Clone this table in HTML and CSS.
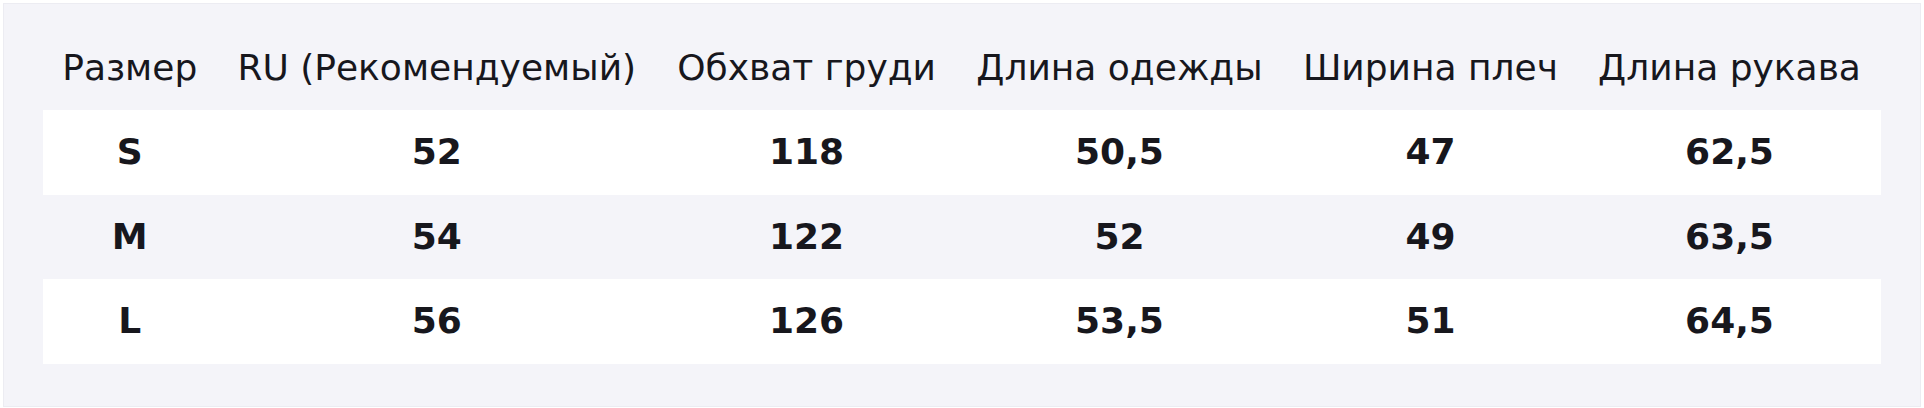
FILE: index.html
```html
<!DOCTYPE html>
<html lang="ru">
<head>
<meta charset="utf-8">
<title>Таблица размеров</title>
<link rel="stylesheet" href="styles.css">
</head>
<body>
<div class="panel">
  <table class="sizes">
    <thead>
      <tr>
        <th>Размер</th>
        <th>RU (Рекомендуемый)</th>
        <th>Обхват груди</th>
        <th>Длина одежды</th>
        <th>Ширина плеч</th>
        <th>Длина рукава</th>
      </tr>
    </thead>
    <tbody>
      <tr class="odd"><td>S</td><td>52</td><td>118</td><td>50,5</td><td>47</td><td>62,5</td></tr>
      <tr class="even"><td>M</td><td>54</td><td>122</td><td>52</td><td>49</td><td>63,5</td></tr>
      <tr class="odd"><td>L</td><td>56</td><td>126</td><td>53,5</td><td>51</td><td>64,5</td></tr>
    </tbody>
  </table>
</div>
</body>
</html>
```

FILE: styles.css
```css
html, body {
  margin: 0;
  padding: 0;
  background: #ffffff;
}
body {
  padding: 3px;
  font-family: "DejaVu Sans", "Liberation Sans", sans-serif;
  color: #17171d;
}
.panel {
  background: #f4f4f9;
  border: 1px solid #ececf2;
  padding: 43px 39px 41px;
  height: 318px;
}
.sizes {
  width: 100%;
  table-layout: auto;
  border-collapse: collapse;
  border-spacing: 0;
}
.sizes th {
  font-weight: normal;
  font-size: 36px;
  line-height: 42px;
  padding: 0 18px 21px;
  text-align: center;
  white-space: nowrap;
}
.sizes td {
  font-weight: bold;
  font-size: 36px;
  line-height: 42px;
  height: 84.5px;
  padding: 0 18px;
  text-align: center;
  vertical-align: middle;
  box-sizing: border-box;
}
.sizes tr.odd td {
  background: #ffffff;
}
.sizes tr.even td {
  background: #f4f4f9;
}
```
